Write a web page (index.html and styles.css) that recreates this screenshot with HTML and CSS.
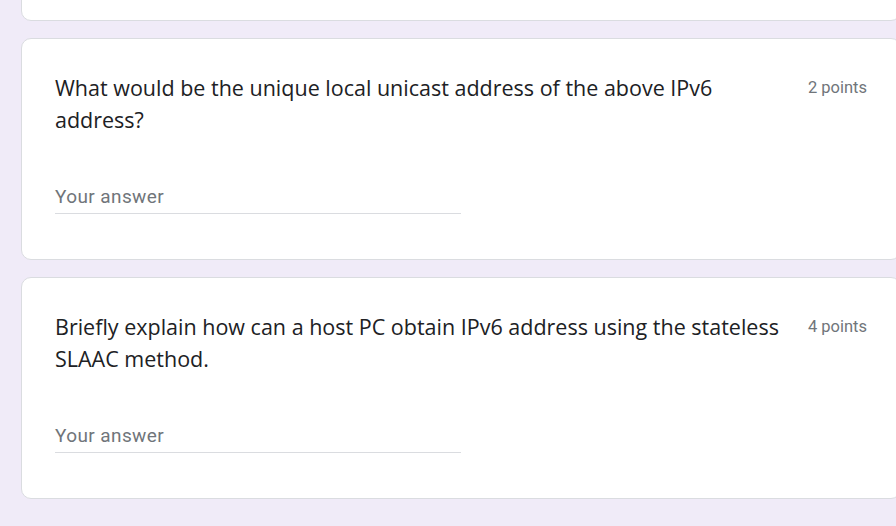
FILE: index.html
```html
<!DOCTYPE html>
<html>
<head>
<meta charset="utf-8">
<link rel="stylesheet" href="styles.css">
</head>
<body>
<div class="page">
  <div class="card card-top"></div>
  <div class="card">
    <div class="q-row">
      <div class="q-text">What would be the unique local unicast address of the above IPv6 address?</div>
      <div class="q-points">2 points</div>
    </div>
    <div class="answer"><span class="placeholder">Your answer</span></div>
  </div>
  <div class="card">
    <div class="q-row">
      <div class="q-text">Briefly explain how can a host PC obtain IPv6 address using the stateless SLAAC method.</div>
      <div class="q-points">4 points</div>
    </div>
    <div class="answer"><span class="placeholder">Your answer</span></div>
  </div>
</div>
</body>
</html>
```
FILE: styles.css
```css
html, body {
  margin: 0;
  padding: 0;
  background: #f0ebf8;
  overflow: hidden;
  width: 896px;
  height: 526px;
}
.page {
  display: flex;
  flex-direction: column;
  gap: 17px;
  padding-left: 21px;
  width: 880px;
  margin-top: -80px;
}
.card {
  background: #fff;
  border: 1px solid #dadce0;
  border-radius: 10px;
  padding: 33px 33px 45px 33px;
  box-sizing: border-box;
  width: 880px;
}
.card-top {
  height: 101px;
  padding: 0;
}
.q-row {
  display: flex;
  align-items: flex-start;
  gap: 24px;
}
.q-text {
  flex: 1;
  font-family: "Open Sans", sans-serif;
  font-size: 21.5px;
  line-height: 32px;
  color: #202124;
}
.q-points {
  font-family: Roboto, sans-serif;
  font-size: 16.5px;
  line-height: 32px;
  color: #70757a;
  white-space: nowrap;
  margin-left: -1px;
}
.answer {
  margin-top: 43px;
  width: 406px;
  height: 34px;
  border-bottom: 1px solid #dadce0;
  display: flex;
  align-items: center;
}
.placeholder {
  font-family: Roboto, sans-serif;
  font-size: 19px;
  letter-spacing: 0.4px;
  color: #70757a;
}
```
